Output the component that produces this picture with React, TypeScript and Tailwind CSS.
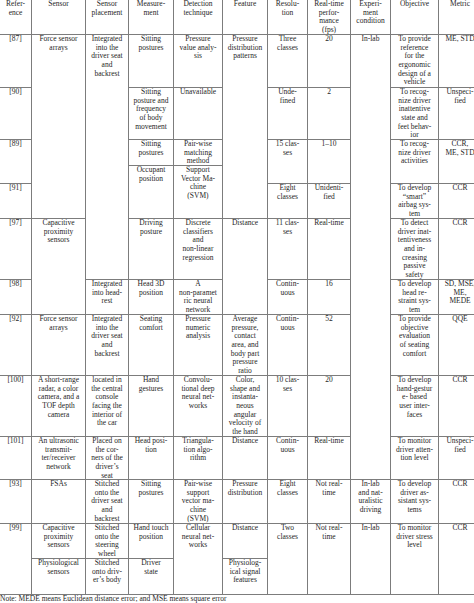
import React from 'react';

const COL = ['', 'col-start-1', 'col-start-2', 'col-start-3', 'col-start-4', 'col-start-5', 'col-start-6', 'col-start-7', 'col-start-8', 'col-start-9', 'col-start-10', 'col-start-11'];
const ROW = ['', 'row-start-1', 'row-start-2', 'row-start-3', 'row-start-4', 'row-start-5', 'row-start-6', 'row-start-7', 'row-start-8', 'row-start-9', 'row-start-10', 'row-start-11', 'row-start-12', 'row-start-13', 'row-start-14'];
const SPAN = ['', 'row-span-1', 'row-span-2', 'row-span-3', 'row-span-4', 'row-span-5', 'row-span-6', 'row-span-7', 'row-span-8', 'row-span-9', 'row-span-10'];

// [column, startRow, rowSpan, text lines]
type Cell = [number, number, number, string[]];

const header: Cell[] = [
  [1, 1, 1, ['Refer-', 'ence']],
  [2, 1, 1, ['Sensor']],
  [3, 1, 1, ['Sensor', 'placement']],
  [4, 1, 1, ['Measure-', 'ment']],
  [5, 1, 1, ['Detection', 'technique']],
  [6, 1, 1, ['Feature']],
  [7, 1, 1, ['Resolu-', 'tion']],
  [8, 1, 1, ['Real-time', 'perfor-', 'mance', '(fps)']],
  [9, 1, 1, ['Experi-', 'ment', 'condition']],
  [10, 1, 1, ['Objective']],
  [11, 1, 1, ['Metric']],
];

const body: Cell[] = [
  // Reference
  [1, 2, 1, ['[87]']],
  [1, 3, 1, ['[90]']],
  [1, 4, 2, ['[89]']],
  [1, 6, 1, ['[91]']],
  [1, 7, 1, ['[97]']],
  [1, 8, 1, ['[98]']],
  [1, 9, 1, ['[92]']],
  [1, 10, 1, ['[100]']],
  [1, 11, 1, ['[101]']],
  [1, 12, 1, ['[93]']],
  [1, 13, 2, ['[99]']],
  // Sensor
  [2, 2, 5, ['Force sensor', 'arrays']],
  [2, 7, 2, ['Capacitive', 'proximity', 'sensors']],
  [2, 9, 1, ['Force sensor', 'arrays']],
  [2, 10, 1, ['A short-range', 'radar, a color', 'camera, and a', 'TOF depth', 'camera']],
  [2, 11, 1, ['An ultrasonic', 'transmit-', 'ter/receiver', 'network']],
  [2, 12, 1, ['FSAs']],
  [2, 13, 1, ['Capacitive', 'proximity', 'sensors']],
  [2, 14, 1, ['Physiological', 'sensors']],
  // Sensor placement
  [3, 2, 6, ['Integrated', 'into the', 'driver seat', 'and', 'backrest']],
  [3, 8, 1, ['Integrated', 'into head-', 'rest']],
  [3, 9, 1, ['Integrated', 'into the', 'driver seat', 'and', 'backrest']],
  [3, 10, 1, ['located in', 'the central', 'console', 'facing the', 'interior of', 'the car']],
  [3, 11, 1, ['Placed on', 'the cor-', 'ners of the', 'driver\u2019s', 'seat']],
  [3, 12, 1, ['Stitched', 'onto the', 'driver seat', 'and', 'backrest']],
  [3, 13, 1, ['Stitched', 'onto the', 'steering', 'wheel']],
  [3, 14, 1, ['Stitched', 'onto driv-', 'er\u2019s body']],
  // Measurement
  [4, 2, 1, ['Sitting', 'postures']],
  [4, 3, 1, ['Sitting', 'posture and', 'frequency', 'of body', 'movement']],
  [4, 4, 1, ['Sitting', 'postures']],
  [4, 5, 2, ['Occupant', 'position']],
  [4, 7, 1, ['Driving', 'posture']],
  [4, 8, 1, ['Head 3D', 'position']],
  [4, 9, 1, ['Seating', 'comfort']],
  [4, 10, 1, ['Hand', 'gestures']],
  [4, 11, 1, ['Head posi-', 'tion']],
  [4, 12, 1, ['Sitting', 'postures']],
  [4, 13, 1, ['Hand touch', 'position']],
  [4, 14, 1, ['Driver', 'state']],
  // Detection technique
  [5, 2, 1, ['Pressure', 'value analy-', 'sis']],
  [5, 3, 1, ['Unavailable']],
  [5, 4, 1, ['Pair-wise', 'matching', 'method']],
  [5, 5, 2, ['Support', 'Vector Ma-', 'chine', '(SVM)']],
  [5, 7, 1, ['Discrete', 'classifiers', 'and', 'non-linear', 'regression']],
  [5, 8, 1, ['A', 'non-paramet', 'ric neural', 'network']],
  [5, 9, 1, ['Pressure', 'numeric', 'analysis']],
  [5, 10, 1, ['Convolu-', 'tional deep', 'neural net-', 'works']],
  [5, 11, 1, ['Triangula-', 'tion algo-', 'rithm']],
  [5, 12, 1, ['Pair-wise', 'support', 'vector ma-', 'chine', '(SVM)']],
  [5, 13, 2, ['Cellular', 'neural net-', 'works']],
  // Feature
  [6, 2, 5, ['Pressure', 'distribution', 'patterns']],
  [6, 7, 2, ['Distance']],
  [6, 9, 1, ['Average', 'pressure,', 'contact', 'area, and', 'body part', 'pressure', 'ratio']],
  [6, 10, 1, ['Color,', 'shape and', 'instanta-', 'neous', 'angular', 'velocity of', 'the hand']],
  [6, 11, 1, ['Distance']],
  [6, 12, 1, ['Pressure', 'distribution']],
  [6, 13, 1, ['Distance']],
  [6, 14, 1, ['Physiolog-', 'ical signal', 'features']],
  // Resolution
  [7, 2, 1, ['Three', 'classes']],
  [7, 3, 1, ['Unde-', 'fined']],
  [7, 4, 2, ['15 clas-', 'ses']],
  [7, 6, 1, ['Eight', 'classes']],
  [7, 7, 1, ['11 clas-', 'ses']],
  [7, 8, 1, ['Contin-', 'uous']],
  [7, 9, 1, ['Contin-', 'uous']],
  [7, 10, 1, ['10 clas-', 'ses']],
  [7, 11, 1, ['Contin-', 'uous']],
  [7, 12, 1, ['Eight', 'classes']],
  [7, 13, 2, ['Two', 'classes']],
  // Real-time performance
  [8, 2, 1, ['20']],
  [8, 3, 1, ['2']],
  [8, 4, 2, ['1\u201310']],
  [8, 6, 1, ['Unidenti-', 'fied']],
  [8, 7, 1, ['Real-time']],
  [8, 8, 1, ['16']],
  [8, 9, 1, ['52']],
  [8, 10, 1, ['20']],
  [8, 11, 1, ['Real-time']],
  [8, 12, 1, ['Not real-', 'time']],
  [8, 13, 2, ['Not real-', 'time']],
  // Experiment condition
  [9, 2, 10, ['In-lab']],
  [9, 12, 1, ['In-lab', 'and nat-', 'uralistic', 'driving']],
  [9, 13, 2, ['In-lab']],
  // Objective
  [10, 2, 1, ['To provide', 'reference', 'for the', 'ergonomic', 'design of a', 'vehicle']],
  [10, 3, 1, ['To recog-', 'nize driver', 'inattentive', 'state and', 'feet behav-', 'ior']],
  [10, 4, 2, ['To recog-', 'nize driver', 'activities']],
  [10, 6, 1, ['To develop', '\u201csmart\u201d', 'airbag sys-', 'tem']],
  [10, 7, 1, ['To detect', 'driver inat-', 'tentiveness', 'and in-', 'creasing', 'passive', 'safety']],
  [10, 8, 1, ['To develop', 'head re-', 'straint sys-', 'tem']],
  [10, 9, 1, ['To provide', 'objective', 'evaluation', 'of seating', 'comfort']],
  [10, 10, 1, ['To develop', 'hand-gestur', 'e- based', 'user inter-', 'faces']],
  [10, 11, 1, ['To monitor', 'driver atten-', 'tion level']],
  [10, 12, 1, ['To develop', 'driver as-', 'sistant sys-', 'tems']],
  [10, 13, 2, ['To monitor', 'driver stress', 'level']],
  // Metric
  [11, 2, 1, ['ME, STD']],
  [11, 3, 1, ['Unspeci-', 'fied']],
  [11, 4, 2, ['CCR,', 'ME, STD']],
  [11, 6, 1, ['CCR']],
  [11, 7, 1, ['CCR']],
  [11, 8, 1, ['SD, MSE,', 'ME,', 'MEDE']],
  [11, 9, 1, ['QQE']],
  [11, 10, 1, ['CCR']],
  [11, 11, 1, ['Unspeci-', 'fied']],
  [11, 12, 1, ['CCR']],
  [11, 13, 2, ['CCR']],
];

function TableCell({ cell }: { cell: Cell }) {
  const [col, row, span, lines] = cell;
  return (
    <div
      className={`${COL[col]} ${ROW[row]} ${SPAN[span]} border-r border-b border-[#7c7c7c] text-center whitespace-nowrap overflow-visible`}
    >
      {lines.map((line, i) => (
        <div key={i}>{line}</div>
      ))}
    </div>
  );
}

export default function App() {
  return (
    <div
      className="w-[474px] h-[603px] overflow-hidden bg-white text-[#262626] text-[7.5px] leading-[8.67px]"
      style={{ fontFamily: '"Liberation Serif", "Times New Roman", serif' }}
    >
      <div className="w-[482px] grid grid-cols-[32px_54px_43px_45px_49px_45px_40px_43px_40px_48px_43px] grid-rows-[35px_53px_52px_26px_18px_35px_61px_35px_61px_61px_43px_44px_35px_36px]">
        {header.map((cell, i) => (
          <TableCell key={`h${i}`} cell={cell} />
        ))}
        {body.map((cell, i) => (
          <TableCell key={`b${i}`} cell={cell} />
        ))}
      </div>
      <div className="whitespace-nowrap">
        Note: MEDE means Euclidean distance error; and MSE means square error
      </div>
    </div>
  );
}
